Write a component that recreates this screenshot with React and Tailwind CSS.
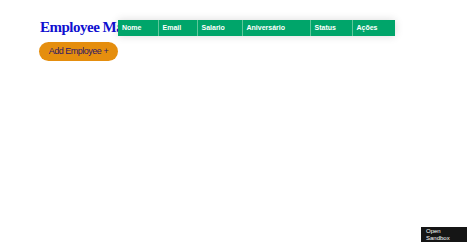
import React from 'react';

const columns = ['Nome', 'Email', 'Salario', 'Aniversário', 'Status', 'Ações'];
const widths = ['w-[40px]', 'w-[39px]', 'w-[45px]', 'w-[68px]', 'w-[42px]', 'w-[43px]'];

export default function App() {
  return (
    <div className="relative w-[474px] h-[248px] bg-white overflow-hidden">
      <div className="pl-[40px] pt-[18px]">
        <h1 className="text-[15px] leading-[18px] font-bold text-[#1010d0] whitespace-nowrap tracking-[-0.5px]" style={{ fontFamily: '"Liberation Serif", serif' }}>
          Employee Management
        </h1>
        <button className="mt-[6px] h-[19px] w-[79px] -ml-[1px] rounded-full bg-[#e58e0e] text-[9px] tracking-[-0.5px] text-[#2e1868]" style={{ fontFamily: '"Liberation Sans", Arial, sans-serif' }}>
          Add Employee +
        </button>
      </div>

      {/* table header sitting over the title */}
      <table className="absolute left-[118px] top-[20px] border-collapse shadow-[0_0_8px_rgba(0,0,0,0.15)]" style={{ fontFamily: '"Liberation Sans", Arial, sans-serif' }}>
        <thead>
          <tr className="bg-[#00a56a] text-white">
            {columns.map((c, i) => (
              <th key={c} className={`${widths[i]} h-[16px] px-[4px] text-left text-[7px] font-bold border-l border-[#5fc79a] first:border-l-0`}>
                {c}
              </th>
            ))}
          </tr>
        </thead>
      </table>

      <div className="absolute right-[7px] bottom-[6px] w-[46px] bg-[#151515] px-[5px] py-[1px] text-[6px] leading-[6.5px] text-white" style={{ fontFamily: '"Liberation Sans", Arial, sans-serif' }}>
        <div>Open</div>
        <div>Sandbox</div>
      </div>
    </div>
  );
}
